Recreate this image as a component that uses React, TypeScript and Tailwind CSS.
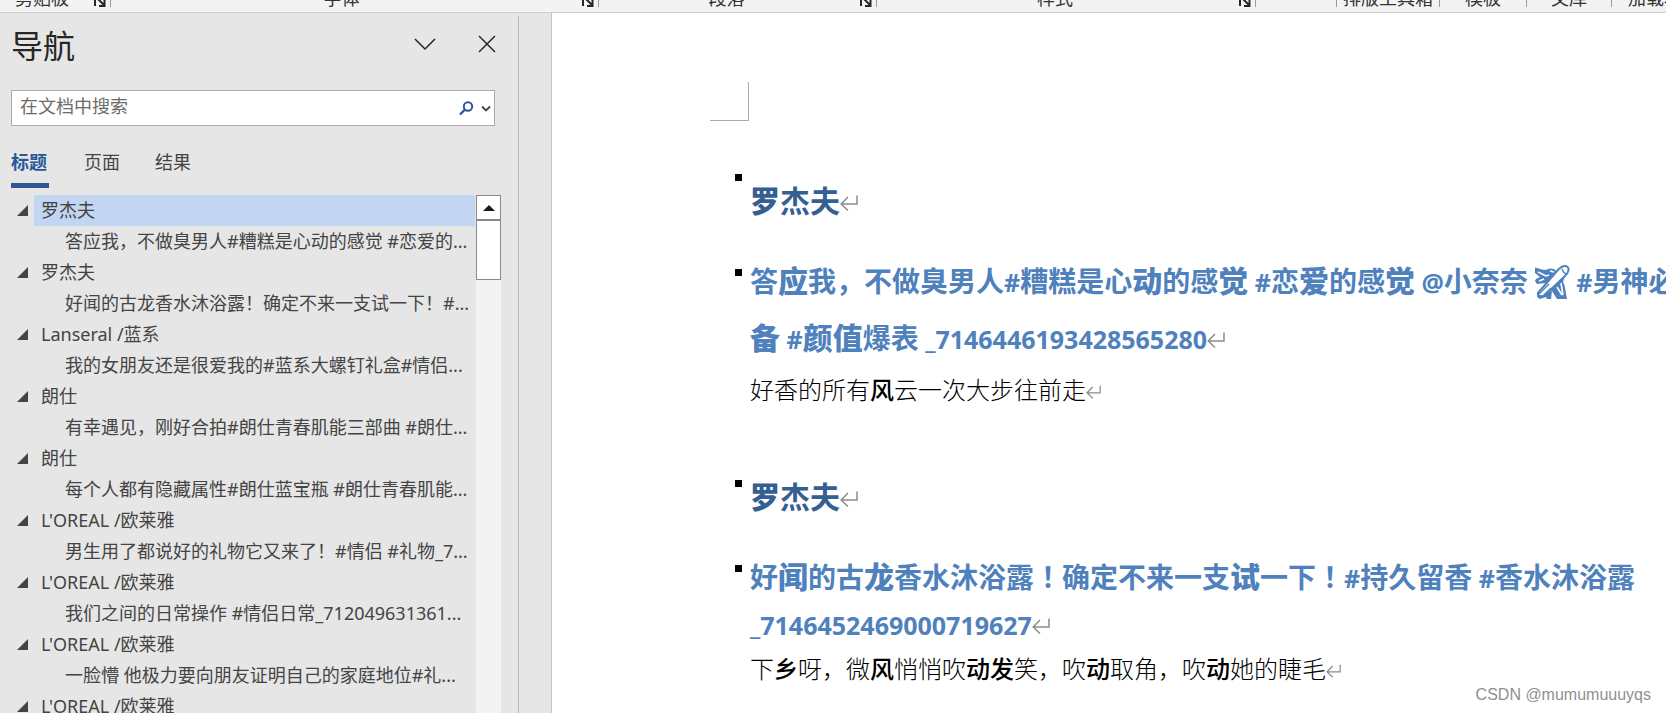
import React from "react";

type RibbonGroup = { label: string; width: string; launcher: boolean };

const ribbonGroups: RibbonGroup[] = [
  { label: "剪贴板", width: "w-[111px]", launcher: true },
  { label: "字体", width: "w-[488px]", launcher: true },
  { label: "段落", width: "w-[278px] pl-1", launcher: true },
  { label: "样式", width: "w-[379px] pl-1", launcher: true },
  { label: "", width: "w-[81px]", launcher: false },
  { label: "排版工具箱", width: "w-[103px]", launcher: false },
  { label: "模板", width: "w-[87px]", launcher: false },
  { label: "文库", width: "w-[85px]", launcher: false },
];

const outline = [
  { title: "罗杰夫", child: "答应我，不做臭男人#糟糕是心动的感觉 #恋爱的..." },
  { title: "罗杰夫", child: "好闻的古龙香水沐浴露！确定不来一支试一下！#..." },
  { title: "Lanseral /蓝系", child: "我的女朋友还是很爱我的#蓝系大螺钉礼盒#情侣..." },
  { title: "朗仕", child: "有幸遇见，刚好合拍#朗仕青春肌能三部曲 #朗仕..." },
  { title: "朗仕", child: "每个人都有隐藏属性#朗仕蓝宝瓶 #朗仕青春肌能..." },
  { title: "L'OREAL /欧莱雅", child: "男生用了都说好的礼物它又来了！#情侣 #礼物_7..." },
  { title: "L'OREAL /欧莱雅", child: "我们之间的日常操作 #情侣日常_712049631361..." },
  { title: "L'OREAL /欧莱雅", child: "一脸懵 他极力要向朋友证明自己的家庭地位#礼..." },
  { title: "L'OREAL /欧莱雅", child: "" },
];

function LauncherIcon() {
  return (
    <svg className="h-3 w-3" viewBox="0 0 12 12" fill="none" stroke="#262626" strokeWidth="2">
      <path d="M1 11V1h10M4 4l6 6M10.500 4v7H5" />
    </svg>
  );
}

function Ribbon() {
  return (
    <header className="flex h-[13px] shrink-0 items-end overflow-hidden border-b border-[#d0d0d0] bg-[#f3f3f3] pb-[5px] text-[18px] leading-[22px] text-[#333]">
      {ribbonGroups.map((g, i) => (
        <div
          key={i}
          className={`${g.width} flex h-[22px] shrink-0 items-end whitespace-nowrap border-r border-[#9a9a9a]`}
        >
          <span className="-mb-[2px] flex-1 text-center">{g.label}</span>
          {g.launcher && (
            <button aria-label={`${g.label}设置`} className="ml-[10px] mr-1 flex shrink-0">
              <LauncherIcon />
            </button>
          )}
        </div>
      ))}
      <span className="-mb-[2px] whitespace-nowrap pl-4">加载项</span>
    </header>
  );
}

function NavigationPane() {
  return (
    <aside className="mt-[3px] flex w-[519px] shrink-0 flex-col border-r border-[#bcbcbc] pl-[11px] text-[#444]">
      <div className="mr-[23px] flex h-[74px] items-start justify-between">
        <h2 className="pt-2 text-[32px] leading-[44px] text-[#262626]">导航</h2>
        <div className="flex gap-10 pt-[17px]">
          <button aria-label="任务窗格选项">
            <svg className="h-[22px] w-[22px]" viewBox="0 0 22 22" fill="none" stroke="#262626" strokeWidth="1.500">
              <path d="M1 6l10 10L21 6" />
            </svg>
          </button>
          <button aria-label="关闭" className="mr-[-3px]">
            <svg className="h-[22px] w-[22px]" viewBox="0 0 22 22" fill="none" stroke="#262626" strokeWidth="1.500">
              <path d="M3 3l16 16M19 3L3 19" />
            </svg>
          </button>
        </div>
      </div>

      <div className="mr-[23px] flex h-9 shrink-0 items-center border border-[#ababab] bg-white">
        <input
          type="text"
          aria-label="在文档中搜索"
          placeholder="在文档中搜索"
          className="h-full min-w-0 flex-1 bg-transparent px-2 pb-1 text-[18px] outline-none placeholder:text-[#6b6b6b]"
        />
        <button aria-label="搜索" className="mr-[7px]">
          <svg className="h-[15px] w-[15px]" viewBox="0 0 15 15" fill="none" stroke="#2b579a" strokeWidth="2">
            <circle cx="9" cy="5.500" r="4.200" />
            <path d="M6 8.500L1 13.500" strokeWidth="2.400" />
          </svg>
        </button>
        <button aria-label="搜索选项" className="mr-[3px]">
          <svg className="h-[10px] w-[10px]" viewBox="0 0 10 10" fill="none" stroke="#444" strokeWidth="1.800">
            <path d="M1 3.500l4 4 4-4" />
          </svg>
        </button>
      </div>

      <div role="tablist" className="flex h-[69px] shrink-0 gap-[35px] pt-[23px] text-[18px] leading-[26px]">
        <button role="tab" aria-selected="true" className="flex h-[39px] w-[38px] items-start border-b-5 border-[#2b579a] font-bold text-[#2b579a]">
          标题
        </button>
        <button role="tab" aria-selected="false" className="flex h-[39px] items-start">页面</button>
        <button role="tab" aria-selected="false" className="flex h-[39px] items-start">结果</button>
      </div>

      <div className="mr-[17px] flex min-h-0 flex-1">
        <ul className="min-w-0 flex-1 overflow-hidden pr-px text-[18px] leading-[31px]">
          {outline.map((item, i) => (
            <li key={i}>
              <div className="flex h-[31px]">
                <button aria-label="折叠" className="flex w-[23px] shrink-0 items-center pl-[6px]">
                  <svg className="h-[11px] w-[11px]" viewBox="0 0 11 11" fill="#444">
                    <path d="M11 0v11H0z" />
                  </svg>
                </button>
                <a href="#doc" className={i === 0 ? "flex-1 bg-[#c2d5f2] pl-[7px]" : "flex-1 pl-[7px]"}>
                  {item.title}
                </a>
              </div>
              {item.child && (
                <a href="#doc" className="block h-[31px] whitespace-nowrap pl-[54px]">
                  {item.child}
                </a>
              )}
            </li>
          ))}
        </ul>
        <div className="flex w-[25px] shrink-0 flex-col bg-[#f3f3f3]">
          <button aria-label="向上滚动" className="flex h-[25px] items-center justify-center border border-[#8a8a8a] bg-white">
            <svg className="h-[6px] w-3" viewBox="0 0 12 6" fill="#1a1a1a">
              <path d="M6 0l6 6H0z" />
            </svg>
          </button>
          <div className="h-[60px] border border-[#8a8a8a] bg-white" />
        </div>
      </div>
    </aside>
  );
}

function ReturnMark({ small = false }: { small?: boolean }) {
  return (
    <svg
      className={small ? "inline-block h-[14px] w-[15px] align-[0px]" : "inline-block h-4 w-[18px] align-[1px]"}
      viewBox="0 0 18 16"
      fill="none"
      stroke="#8c8c8c"
      strokeWidth="1.500"
    >
      <path d="M17 0.500V9H1.500M8 2L1.200 9L8 15.500" />
    </svg>
  );
}

function Plane() {
  return (
    <svg className="ml-[6px] inline-block h-[35px] w-[36px] align-[-7px]" viewBox="0 0 36 35">
      <path d="M1 3.500l7 2 3 .5 5-1.500 4 .5 3 3-11 11-9 1-2-3 1-2 4-2-5-4z" fill="#4f81bd" />
      <path d="M31 12l-2 6 1.500 3 2.500 14h-10l-5-8-1 8h-4l-1-2-6 2-3-2 1-3z" fill="#4f81bd" />
      <path d="M4 8l8 4 3-1M16 7l4 1M5 17l5-2M27 19l2 12M23 23l5 8M16 27l2-3M7 31l3-1" fill="none" stroke="#fff" strokeWidth="1.600" />
      <path
        d="M4 29L23 7C27 2.500 30 1 33 2.500C35.500 4 35 8 31 12L11 31C8 33 3 32.500 4 29z"
        fill="#fff"
        stroke="#4f81bd"
        strokeWidth="2"
      />
      <path d="M5 30l10-10M10 31l7-7M28 5c1 3 2 4 4 5" fill="none" stroke="#4f81bd" strokeWidth="1.400" />
    </svg>
  );
}

function Latin({ children }: { children: React.ReactNode }) {
  return <span className="font-['Open_Sans'] text-[25px] font-bold">{children}</span>;
}

function Heavy({ children }: { children: React.ReactNode }) {
  return <span className="text-[30px] font-black">{children}</span>;
}

function Exclaim() {
  return (
    <span lang="zh-TW" className="font-['Noto_Sans_CJK_TC']">
      ！
    </span>
  );
}

function Bullet({ offset }: { offset: string }) {
  return <span className={`${offset} mr-2 h-[7px] w-[7px] shrink-0 bg-black`} />;
}

function DocumentPage() {
  return (
    <main
      id="doc"
      className="relative min-w-0 flex-1 overflow-hidden whitespace-nowrap border-l border-[#c6c6c6] bg-white"
    >
      <div className="ml-[158px] mt-[69px] h-[39px] w-[39px] border-b border-r border-[#ababab]" />

      <article className="ml-[183px] mt-[53px]">
        <div className="flex h-[78px]">
          <Bullet offset="mt-0" />
          <h1 className="pt-[9px] text-[30px] font-bold leading-[36px] text-[#365f91]">
            <Heavy>罗</Heavy>杰夫
            <ReturnMark />
          </h1>
        </div>
        <div className="flex">
          <Bullet offset="mt-[17px]" />
          <h2 className="text-[28px] font-bold leading-[57px] text-[#4f81bd]">
            <span className="block h-[57px]">
              答<Heavy>应</Heavy>我，不做臭男人<Latin>#</Latin>糟糕是心<Heavy>动</Heavy>的感<Heavy>觉</Heavy>
              <Latin> #</Latin>恋<Heavy>爱</Heavy>的感<Heavy>觉</Heavy>
              <Latin> @</Latin>小奈奈
              <Plane />
              <Latin> #</Latin>男神必
            </span>
            <span className="block h-[57px]">
              <Heavy>备</Heavy>
              <Latin> #</Latin>
              <Heavy>颜值</Heavy>爆表<Latin> _7146446193428565280</Latin>
              <ReturnMark />
            </span>
          </h2>
        </div>
        <p className="mt-[9px] pl-[15px] text-[24px] font-light leading-[30px] text-black">
          好香的所有<span className="font-medium">风</span>云一次大步往前走
          <ReturnMark small />
        </p>
      </article>

      <article className="ml-[183px] mt-[75px]">
        <div className="flex h-[72px]">
          <Bullet offset="mt-0" />
          <h1 className="text-[30px] font-bold leading-[34px] text-[#365f91]">
            <Heavy>罗</Heavy>杰夫
            <ReturnMark />
          </h1>
        </div>
        <div className="flex">
          <Bullet offset="mt-[13px]" />
          <h2 className="text-[28px] font-bold leading-[48px] text-[#4f81bd]">
            <span className="block h-[48px]">
              好<Heavy>闻</Heavy>的古<Heavy>龙</Heavy>香水沐浴露<Exclaim />确定不来一支<Heavy>试</Heavy>一下<Exclaim />
              <Latin>#</Latin>持久留香<Latin> #</Latin>香水沐浴露
            </span>
            <span className="block h-[48px]">
              <Latin>_7146452469000719627</Latin>
              <ReturnMark />
            </span>
          </h2>
        </div>
        <p className="mt-[6px] pl-[15px] text-[24px] font-light leading-[30px] text-black">
          下<span className="font-medium">乡</span>呀，微<span className="font-medium">风</span>悄悄吹
          <span className="font-medium">动发</span>笑，吹<span className="font-medium">动</span>取角，吹
          <span className="font-medium">动</span>她的睫毛
          <ReturnMark small />
        </p>
      </article>

      <span className="absolute bottom-[8px] right-[15px] font-['Liberation_Sans'] text-[16px] leading-[20px] text-[#8f8f8f]">
        CSDN @mumumuuuyqs
      </span>
    </main>
  );
}

export default function App() {
  return (
    <div
      lang="zh-CN"
      className="flex h-screen flex-col overflow-hidden bg-[#e6e6e6] font-['Noto_Sans','Noto_Sans_CJK_SC',sans-serif]"
    >
      <Ribbon />
      <div className="flex min-h-0 flex-1">
        <NavigationPane />
        <div className="w-8 shrink-0" />
        <DocumentPage />
      </div>
    </div>
  );
}
